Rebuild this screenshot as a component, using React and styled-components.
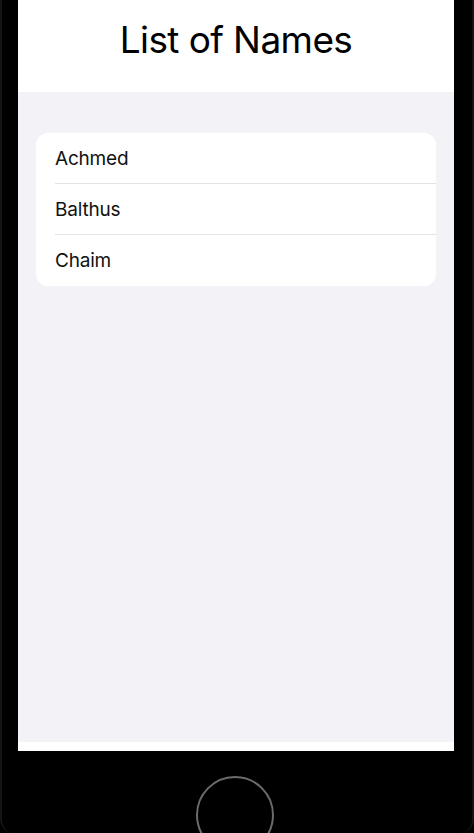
import React from 'react';
import styled, { createGlobalStyle } from 'styled-components';

const GlobalStyle = createGlobalStyle`
	html, body {
		margin: 0;
		padding: 0;
		background: #000;
	}
	body {
		font-family: Inter, 'Noto Sans', sans-serif;
	}
`;

const names = ['Achmed', 'Balthus', 'Chaim'];

export default function App() {
	return (
		<>
			<GlobalStyle />
			<Frame>
				<Screen>
					<Header>
						<Title>List of Names</Title>
					</Header>
					<Content>
						<Card>
							{names.map((name, i) => (
								<Row key={name} $last={i === names.length - 1}>
									<RowText>{name}</RowText>
								</Row>
							))}
						</Card>
					</Content>
					<BottomStrip />
				</Screen>
				<HomeArea>
					<HomeButton />
				</HomeArea>
			</Frame>
		</>
	);
}

const Frame = styled.div`
	width: 474px;
	height: 833px;
	background: #000;
	overflow: hidden;
	box-sizing: border-box;
	border-left: 2px solid #151515;
	border-right: 2px solid #151515;
	border-radius: 0 0 14px 14px;
	display: flex;
	flex-direction: column;
`;

const Screen = styled.div`
	width: 436px;
	height: 751px;
	margin-left: 16px;
	display: flex;
	flex-direction: column;
	background: #fff;
`;

const Header = styled.div`
	height: 92px;
	background: #fff;
	display: flex;
	justify-content: center;
	box-sizing: border-box;
	padding-top: 17px;
`;

const Title = styled.h1`
	margin: 0;
	font-size: 37px;
	font-weight: 400;
	line-height: 46px;
	color: #000;
	letter-spacing: -0.6px;
`;

const Content = styled.div`
	height: 650px;
	background: #f2f2f7;
	box-sizing: border-box;
	padding: 41px 18px 0;
`;

const Card = styled.div`
	background: #fff;
	border-radius: 12px;
	overflow: hidden;
`;

const Row = styled.div`
	height: 51px;
	margin-left: 19px;
	display: flex;
	align-items: center;
	box-sizing: border-box;
	border-bottom: ${(p) => (p.$last ? 'none' : '1px solid #e3e3e8')};
`;

const RowText = styled.span`
	font-size: 19px;
	color: #111;
	letter-spacing: -0.2px;
`;

const BottomStrip = styled.div`
	height: 9px;
	background: #fff;
`;

const HomeArea = styled.div`
	display: flex;
	justify-content: center;
	padding-top: 25px;
	padding-right: 4px;
`;

const HomeButton = styled.div`
	width: 74px;
	height: 74px;
	border-radius: 50%;
	border: 2px solid #6b6b6b;
	flex-shrink: 0;
`;
